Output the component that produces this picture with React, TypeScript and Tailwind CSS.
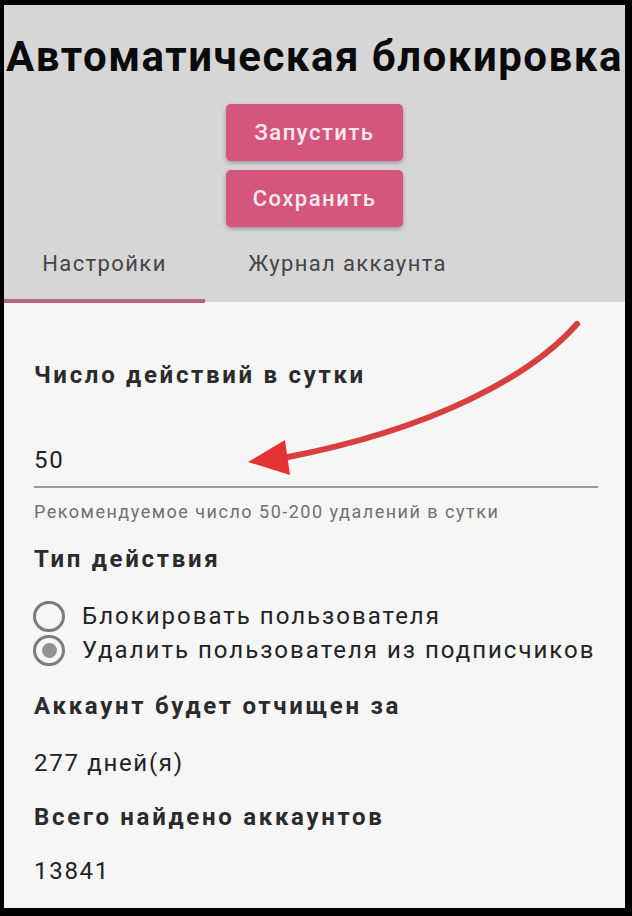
import React from 'react';

const font = { fontFamily: 'Roboto, "Noto Sans", sans-serif' };

function Radio({ checked, label }: { checked?: boolean; label: string }) {
  return (
    <div className="flex items-center h-[34px]">
      <span className="ml-[-1px] w-[32px] h-[31px] rounded-full border-[3px] border-[#7c7c7c] flex items-center justify-center shrink-0">
        {checked && <span className="w-[15px] h-[15px] rounded-full bg-[#939393]" />}
      </span>
      <span className="ml-[17px] text-[24px] leading-[34px] text-[#222] tracking-[2px] whitespace-nowrap">{label}</span>
    </div>
  );
}

function Heading({ children, className = '' }: { children: React.ReactNode; className?: string }) {
  return (
    <div className={`h-[28px] leading-[28px] text-[24px] font-bold tracking-[2.7px] text-[#2b2b2b] whitespace-nowrap ${className}`}>
      {children}
    </div>
  );
}

function Value({ children, className = '' }: { children: React.ReactNode; className?: string }) {
  return <div className={`h-[30px] leading-[30px] text-[24px] tracking-[1.7px] text-[#222] ${className}`}>{children}</div>;
}

export default function App() {
  return (
    <div className="w-[632px] h-[916px] bg-black pt-[5px] pl-[4px] pr-[7px] pb-[8px]" style={font}>
      <div className="relative w-full h-full flex flex-col bg-[#f6f6f6] overflow-hidden">
        {/* header */}
        <div className="bg-[#d7d6d7] h-[297px] flex flex-col items-center shrink-0">
          <h1 className="mt-[28px] text-[42px] leading-[48px] font-bold text-[#0a0a0a] tracking-[1.5px] whitespace-nowrap">
            Автоматическая блокировка
          </h1>
          <div className="mt-[23px] flex flex-col gap-[9px]">
            <button className="w-[177px] h-[57px] rounded-[5px] bg-[#d4567d] text-[#fce9ef] text-[22px] font-medium tracking-[1.5px] shadow-[0_2px_4px_rgba(0,0,0,0.3)]">
              Запустить
            </button>
            <button className="w-[177px] h-[57px] rounded-[5px] bg-[#d4567d] text-[#fce9ef] text-[22px] font-medium tracking-[1.5px] shadow-[0_2px_4px_rgba(0,0,0,0.3)]">
              Сохранить
            </button>
          </div>
          <div className="mt-auto w-full flex">
            <div className="w-[201px] h-[76px] flex flex-col">
              <div className="flex-1 flex items-center justify-center text-[22px] text-[#454545] tracking-[1.4px]">Настройки</div>
              <div className="h-[4px] bg-[#b5657c]" />
            </div>
            <div className="w-[285px] h-[76px] flex items-center justify-center pb-[4px] text-[22px] text-[#454545] tracking-[1.35px]">
              Журнал аккаунта
            </div>
          </div>
        </div>

        {/* content */}
        <div className="pl-[30px] pr-[27px] flex flex-col">
          <Heading className="mt-[59px]">Число действий в сутки</Heading>
          <Value className="mt-[56px]">50</Value>
          <div className="mt-[11px] h-[2px] bg-[#9a9a9a]" />
          <div className="mt-[13px] h-[22px] leading-[22px] text-[18px] tracking-[1.5px] text-[#707070] whitespace-nowrap">
            Рекомендуемое число 50-200 удалений в сутки
          </div>
          <Heading className="mt-[22px]">Тип действия</Heading>
          <div className="mt-[26px] flex flex-col">
            <Radio label="Блокировать пользователя" />
            <Radio checked label="Удалить пользователя из подписчиков" />
          </div>
          <Heading className="mt-[25px]">Аккаунт будет отчищен за</Heading>
          <Value className="mt-[28px]">277 дней(я)</Value>
          <Heading className="mt-[25px]">Всего найдено аккаунтов</Heading>
          <Value className="mt-[25px]">13841</Value>
        </div>

        {/* red annotation arrow (coords relative to inner panel: screen - (4,5)) */}
        <svg className="absolute left-0 top-0 pointer-events-none" width="625" height="903" viewBox="0 0 625 903">
          <path
            d="M573 319 C 526 372, 428 424, 284 452"
            fill="none"
            stroke="#d83f3f"
            strokeWidth="6"
            strokeLinecap="round"
          />
          <polygon points="244,457 281,435 286,470" fill="#e53232" />
        </svg>
      </div>
    </div>
  );
}
